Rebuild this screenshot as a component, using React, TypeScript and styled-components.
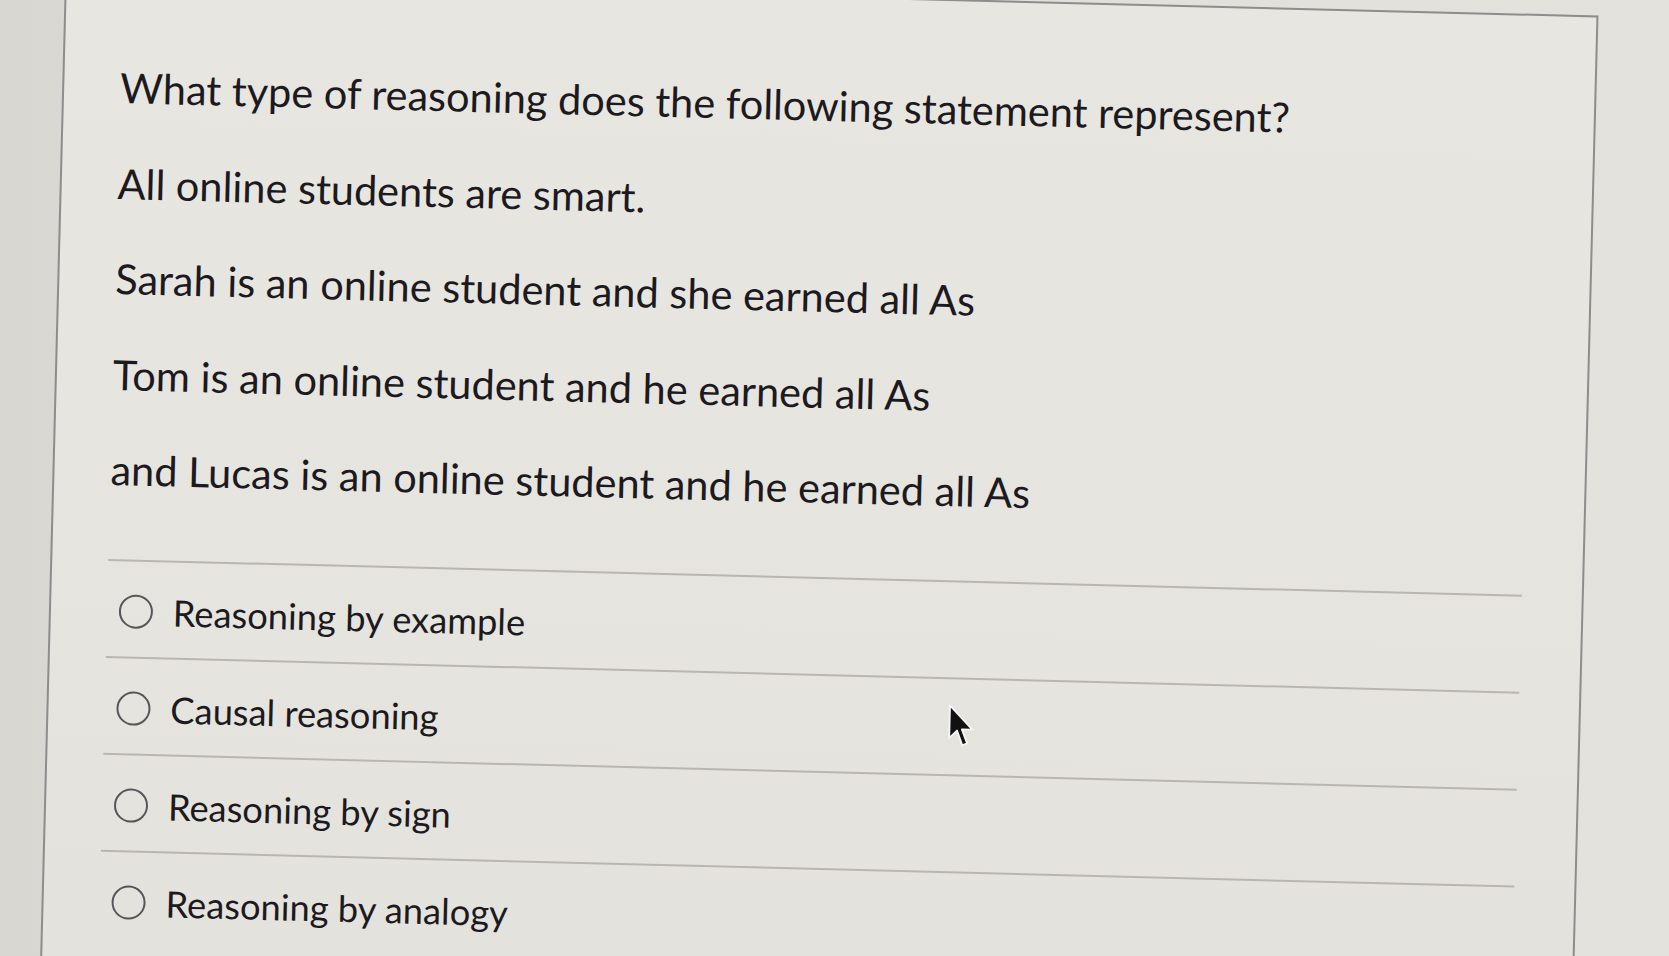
import styled, { createGlobalStyle } from 'styled-components'

const GlobalStyle = createGlobalStyle`
  html, body {
    margin: 0;
    padding: 0;
    background: #dedcd7;
    overflow: hidden;
  }
`

const Viewport = styled.div`
  width: 100vw;
  height: 100vh;
  overflow: hidden;
  background: linear-gradient(90deg, #d9d7d2 0%, #e0ded9 40%, #e4e2dd 100%);
`

// the photo was taken at a small angle, so the whole screen is tilted
const Tilt = styled.div`
  position: relative;
  padding-left: 65px;
  transform: rotate(1.45deg);
  transform-origin: 0 0;
`

const Panel = styled.section`
  width: 1534px;
  min-height: 1100px;
  margin-top: -25px;
  border: 2px solid #8f8c8d;
  background: linear-gradient(180deg, #e8e6e1 0%, #e6e4df 60%, #e3e1dc 100%);
  padding: 60px 56px 0 56px;
  box-sizing: border-box;
  font-family: Lato, "Noto Sans", sans-serif;
  color: #1c1a20;
`

const Line = styled.p`
  margin: 0;
  font-size: 41.5px;
  line-height: 95.5px;
  white-space: nowrap;
`

const Answers = styled.ul`
  list-style: none;
  margin: 41px 0 0 0;
  padding: 0;
  width: 1414px;
`

const Answer = styled.li`
  display: flex;
  align-items: center;
  gap: 20px;
  padding: 30px 0 25px 12px;
  border-top: 2px solid #b9b6b1;
`

const Radio = styled.span`
  width: 30px;
  height: 30px;
  border-radius: 50%;
  border: 2px solid #57555a;
  flex-shrink: 0;
`

const AnswerText = styled.span`
  font-size: 36.3px;
  line-height: 40px;
  white-space: nowrap;
`

const Pointer = styled.svg`
  position: absolute;
  left: 966px;
  top: 704px;
  width: 28px;
  height: 46px;
`

const statements = [
  'All online students are smart.',
  'Sarah is an online student and she earned all As',
  'Tom is an online student and he earned all As',
  'and Lucas is an online student and he earned all As',
]

const choices = [
  'Reasoning by example',
  'Causal reasoning',
  'Reasoning by sign',
  'Reasoning by analogy',
]

export default function App() {
  return (
    <Viewport>
      <GlobalStyle />
      <Tilt>
        <Panel>
          <Line>What type of reasoning does the following statement represent?</Line>
          {statements.map((s) => (
            <Line key={s}>{s}</Line>
          ))}
          <Answers>
            {choices.map((c) => (
              <Answer key={c}>
                <Radio />
                <AnswerText>{c}</AnswerText>
              </Answer>
            ))}
          </Answers>
        </Panel>
        <Pointer viewBox="0 0 20 33">
          <path
            d="M1.5 1.5 L1.5 25 L7 19.5 L11 30 L14.5 28.5 L10.5 18.5 L18 18.5 Z"
            fill="#111"
            stroke="#f4f4f4"
            strokeWidth="1.4"
            strokeLinejoin="round"
          />
        </Pointer>
      </Tilt>
    </Viewport>
  )
}
